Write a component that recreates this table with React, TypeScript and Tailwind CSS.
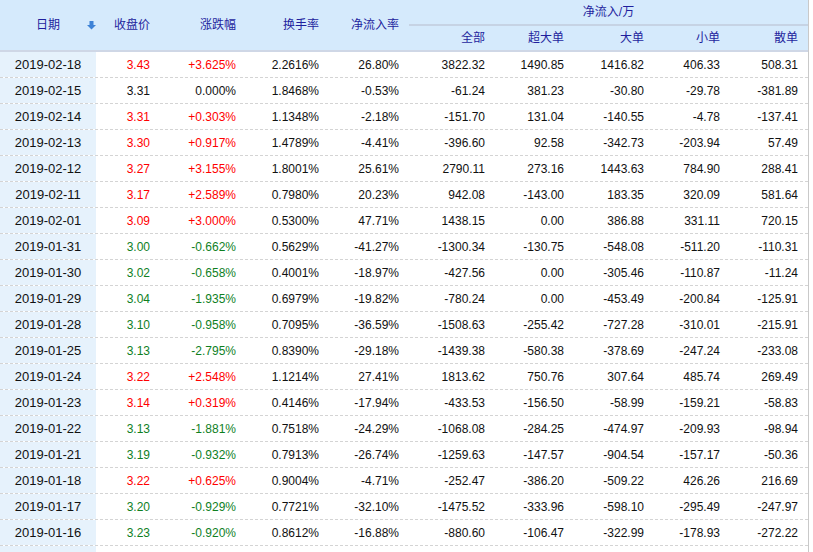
import React from "react";

type Row = { d: string; c: string[]; t: "up" | "down" | "flat" };

const rows: Row[] = [
  { d: "2019-02-18", c: ["3.43", "+3.625%", "2.2616%", "26.80%", "3822.32", "1490.85", "1416.82", "406.33", "508.31"], t: "up" },
  { d: "2019-02-15", c: ["3.31", "0.000%", "1.8468%", "-0.53%", "-61.24", "381.23", "-30.80", "-29.78", "-381.89"], t: "flat" },
  { d: "2019-02-14", c: ["3.31", "+0.303%", "1.1348%", "-2.18%", "-151.70", "131.04", "-140.55", "-4.78", "-137.41"], t: "up" },
  { d: "2019-02-13", c: ["3.30", "+0.917%", "1.4789%", "-4.41%", "-396.60", "92.58", "-342.73", "-203.94", "57.49"], t: "up" },
  { d: "2019-02-12", c: ["3.27", "+3.155%", "1.8001%", "25.61%", "2790.11", "273.16", "1443.63", "784.90", "288.41"], t: "up" },
  { d: "2019-02-11", c: ["3.17", "+2.589%", "0.7980%", "20.23%", "942.08", "-143.00", "183.35", "320.09", "581.64"], t: "up" },
  { d: "2019-02-01", c: ["3.09", "+3.000%", "0.5300%", "47.71%", "1438.15", "0.00", "386.88", "331.11", "720.15"], t: "up" },
  { d: "2019-01-31", c: ["3.00", "-0.662%", "0.5629%", "-41.27%", "-1300.34", "-130.75", "-548.08", "-511.20", "-110.31"], t: "down" },
  { d: "2019-01-30", c: ["3.02", "-0.658%", "0.4001%", "-18.97%", "-427.56", "0.00", "-305.46", "-110.87", "-11.24"], t: "down" },
  { d: "2019-01-29", c: ["3.04", "-1.935%", "0.6979%", "-19.82%", "-780.24", "0.00", "-453.49", "-200.84", "-125.91"], t: "down" },
  { d: "2019-01-28", c: ["3.10", "-0.958%", "0.7095%", "-36.59%", "-1508.63", "-255.42", "-727.28", "-310.01", "-215.91"], t: "down" },
  { d: "2019-01-25", c: ["3.13", "-2.795%", "0.8390%", "-29.18%", "-1439.38", "-580.38", "-378.69", "-247.24", "-233.08"], t: "down" },
  { d: "2019-01-24", c: ["3.22", "+2.548%", "1.1214%", "27.41%", "1813.62", "750.76", "307.64", "485.74", "269.49"], t: "up" },
  { d: "2019-01-23", c: ["3.14", "+0.319%", "0.4146%", "-17.94%", "-433.53", "-156.50", "-58.99", "-159.21", "-58.83"], t: "up" },
  { d: "2019-01-22", c: ["3.13", "-1.881%", "0.7518%", "-24.29%", "-1068.08", "-284.25", "-474.97", "-209.93", "-98.94"], t: "down" },
  { d: "2019-01-21", c: ["3.19", "-0.932%", "0.7913%", "-26.74%", "-1259.63", "-147.57", "-904.54", "-157.17", "-50.36"], t: "down" },
  { d: "2019-01-18", c: ["3.22", "+0.625%", "0.9004%", "-4.71%", "-252.47", "-386.20", "-509.22", "426.26", "216.69"], t: "up" },
  { d: "2019-01-17", c: ["3.20", "-0.929%", "0.7721%", "-32.10%", "-1475.52", "-333.96", "-598.10", "-295.49", "-247.97"], t: "down" },
  { d: "2019-01-16", c: ["3.23", "-0.920%", "0.8612%", "-16.88%", "-880.60", "-106.47", "-322.99", "-178.93", "-272.22"], t: "down" },
];

// widths of the 9 value columns
const W = ["w-[64px]", "w-[86px]", "w-[83px]", "w-[80px]", "w-[86px]", "w-[79px]", "w-[80px]", "w-[76px]", "w-[78px]"];

const font = { fontFamily: '"Liberation Sans", Arial, "Noto Sans CJK SC", sans-serif' };

function colorFor(t: Row["t"]) {
  if (t === "up") return "text-[#ff0000]";
  if (t === "down") return "text-[#0f7f1f]";
  return "text-[#111111]";
}

function SortArrow() {
  return (
    <svg width="9" height="9" viewBox="0 0 9 9" className="ml-[27px] shrink-0">
      <rect x="2.5" y="0" width="4" height="4.5" fill="#3d82d6" />
      <polygon points="0,4 9,4 4.5,8.5" fill="#3d82d6" />
    </svg>
  );
}

export default function App() {
  const head = "text-[12px] text-[#1f1f9e]";
  return (
    <div className="w-[813px] h-[552px] bg-white overflow-hidden" style={font}>
      <div className="w-[809px] border-r border-[#c9c9c9]">
        {/* header */}
        <div className={`flex h-[52px] bg-[#d5eafc] border-b-[2px] border-[#cfd7e6] ${head}`}>
          <div className="w-[96px] shrink-0 flex items-center pl-[36px] whitespace-nowrap">
            <span className="shrink-0">日期</span>
            <SortArrow />
          </div>
          <div className={`${W[0]} flex items-center justify-end pr-[10px]`}>收盘价</div>
          <div className={`${W[1]} flex items-center justify-end pr-[10px]`}>涨跌幅</div>
          <div className={`${W[2]} flex items-center justify-end pr-[10px]`}>换手率</div>
          <div className={`${W[3]} flex items-center justify-end pr-[10px]`}>净流入率</div>
          <div className="flex-1 flex flex-col">
            <div className="h-[26px] flex items-center justify-center border-b-[2px] border-[#c6d3e4]">净流入/万</div>
            <div className="flex flex-1 items-center">
              <div className={`${W[4]} text-right pr-[10px]`}>全部</div>
              <div className={`${W[5]} text-right pr-[10px]`}>超大单</div>
              <div className={`${W[6]} text-right pr-[10px]`}>大单</div>
              <div className={`${W[7]} text-right pr-[10px]`}>小单</div>
              <div className={`${W[8]} text-right pr-[10px]`}>散单</div>
            </div>
          </div>
        </div>
        {/* rows */}
        {rows.map((r) => (
          <div key={r.d} className="flex h-[26px] border-b border-dashed border-[#d4d4d4] text-[12px] text-[#111111]">
            <div className="w-[96px] bg-[#e6f2fc] flex items-center justify-center text-[13px]">{r.d}</div>
            {r.c.map((v, i) => (
              <div
                key={i}
                className={`${W[i]} flex items-center justify-end pr-[10px] ${i < 2 ? colorFor(r.t) : ""}`}
              >
                {v}
              </div>
            ))}
          </div>
        ))}
        <div className="flex h-[26px]">
          <div className="w-[96px] bg-[#e6f2fc]" />
        </div>
      </div>
    </div>
  );
}
